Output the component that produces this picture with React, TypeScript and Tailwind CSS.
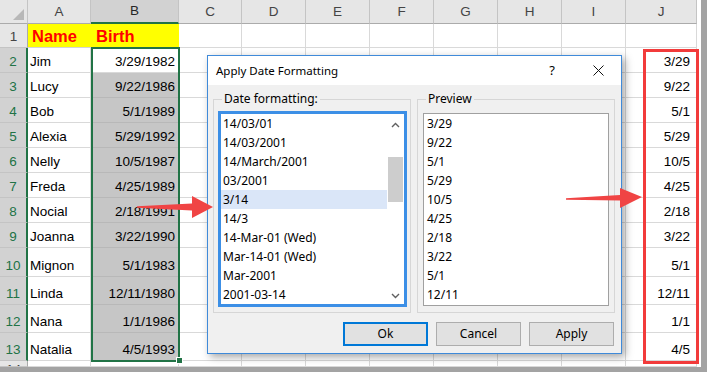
import React from "react";

const names = ["Jim", "Lucy", "Bob", "Alexia", "Nelly", "Freda", "Nocial", "Joanna", "Mignon", "Linda", "Nana", "Natalia"];
const births = ["3/29/1982", "9/22/1986", "5/1/1989", "5/29/1992", "10/5/1987", "4/25/1989", "2/18/1991", "3/22/1990", "5/1/1983", "12/11/1980", "1/1/1986", "4/5/1993"];
const shorts = ["3/29", "9/22", "5/1", "5/29", "10/5", "4/25", "2/18", "3/22", "5/1", "12/11", "1/1", "4/5"];
const formats = ["14/03/01", "14/03/2001", "14/March/2001", "03/2001", "3/14", "14/3", "14-Mar-01 (Wed)", "Mar-14-01 (Wed)", "Mar-2001", "2001-03-14"];
const preview = ["3/29", "9/22", "5/1", "5/29", "10/5", "4/25", "2/18", "3/22", "5/1", "12/11"];
const letters = ["A", "B", "C", "D", "E", "F", "G", "H", "I", "J"];

function Sheet() {
  const cells: React.ReactNode[] = [];
  cells.push(
    <div key="corner" className="relative bg-[#e6e6e6] border-r border-b border-r-[#c4c4c4] border-b-[#ababab]">
      <svg className="absolute right-[3px] bottom-[3px]" width="11" height="11">
        <polygon points="11,0 11,11 0,11" fill="#b8b8b8" />
      </svg>
    </div>
  );
  letters.forEach((l) =>
    cells.push(
      <div
        key={"h" + l}
        className={
          l === "B"
            ? "flex items-center justify-center bg-[#d2d2d2] border-r border-r-[#c4c4c4] border-b-2 border-b-[#217346] text-[#262626]"
            : "flex items-center justify-center bg-[#e6e6e6] border-r border-b border-r-[#c4c4c4] border-b-[#ababab] text-[#444444]"
        }
      >
        {l}
      </div>
    )
  );

  for (let r = 1; r <= 14; r++) {
    const sel = r >= 2 && r <= 13;
    cells.push(
      <div
        key={"rh" + r}
        className={
          sel
            ? "flex items-end justify-center pb-[2px] bg-[#d2d2d2] border-b border-b-[#c4c4c4] border-r-2 border-r-[#217346] text-[#217346] overflow-hidden"
            : "flex items-end justify-center pb-[2px] bg-[#e6e6e6] border-b border-b-[#c4c4c4] border-r border-r-[#ababab] text-[#444444] overflow-hidden"
        }
      >
        {r === 14 ? <span className="relative top-[14px]">14</span> : r}
      </div>
    );
    // A
    if (r === 1) {
      cells.push(
        <div key="a1" className="flex items-end pl-[4px] bg-[#ffff00] border-b border-b-[#d4d4d4] text-[#ff0000] font-bold text-[16.5px] leading-[22px]">
          Name
        </div>
      );
      cells.push(
        <div key="b1" className="flex items-end pl-[5px] bg-[#ffff00] border-b border-b-[#d4d4d4] text-[#ff0000] font-bold text-[16.5px] leading-[22px]">
          Birth
        </div>
      );
    } else if (sel) {
      cells.push(
        <div key={"a" + r} className="flex items-end pl-[2px] pb-[2px] bg-white border-r border-b border-[#d9d9d9]">
          {names[r - 2]}
        </div>
      );
      cells.push(
        <div
          key={"b" + r}
          className={
            r === 2
              ? "flex items-end justify-end pr-[3px] pb-[2px] bg-white border-r border-b border-[#d9d9d9]"
              : "flex items-end justify-end pr-[3px] pb-[2px] bg-[#c6c6c6] border-r border-b border-[#b8b8b8]"
          }
        >
          {births[r - 2]}
        </div>
      );
    } else {
      cells.push(<div key={"a" + r} className="bg-white border-r border-b border-[#d9d9d9]" />);
      cells.push(<div key={"b" + r} className="bg-white border-r border-b border-[#d9d9d9]" />);
    }
    for (let c = 0; c < 7; c++) {
      cells.push(<div key={"e" + r + "-" + c} className="bg-white border-r border-b border-[#d9d9d9]" />);
    }
    cells.push(
      <div key={"j" + r} className="flex items-end justify-end pr-[6px] pb-[2px] bg-white border-r border-b border-[#d9d9d9]">
        {sel ? shorts[r - 2] : ""}
      </div>
    );
  }

  return (
    <div className="grid grid-cols-[28px_63px_88px_63px_64px_64px_64px_64px_64px_64px_71px] grid-rows-[24px_24px_25px_25px_25px_25px_25px_25px_25px_25px_29px_28px_28px_28px_6px] text-[13.5px] leading-[16px] text-black font-['Liberation_Sans',Arial,sans-serif]">
      {cells}
    </div>
  );
}

function Chevron({ up }: { up?: boolean }) {
  return (
    <svg width="9" height="6" viewBox="0 0 9 6">
      <polyline
        points={up ? "1,5 4.5,1.5 8,5" : "1,1 4.5,4.5 8,1"}
        fill="none"
        stroke="#606060"
        strokeWidth="1.4"
      />
    </svg>
  );
}

function Dialog() {
  return (
    <div className="absolute left-[207px] top-[55px] w-[415px] h-[299px] border border-[#3f8ad9] bg-[#f0f0f0] shadow-[3px_3px_8px_rgba(0,0,0,0.35)] flex flex-col font-['Noto_Sans',sans-serif] text-[12px] text-black">
      <div className="h-[29px] bg-white flex items-center">
        <span className="flex-1 pl-[8px] text-[11.5px]">Apply Date Formatting</span>
        <span className="w-[46px] h-full flex items-center justify-center text-[13px]">?</span>
        <span className="w-[46px] h-full flex items-center justify-center">
          <svg width="11" height="11" viewBox="0 0 11 11">
            <line x1="0.5" y1="0.5" x2="10.5" y2="10.5" stroke="#111" strokeWidth="1" />
            <line x1="10.5" y1="0.5" x2="0.5" y2="10.5" stroke="#111" strokeWidth="1" />
          </svg>
        </span>
      </div>
      <div className="flex-1 flex flex-col pl-[5px] pt-[14px]">
        <div className="flex gap-[6px] h-[214px]">
          <div className="relative w-[198px] h-full border border-[#d6d6d6] pt-[11px] pl-[4px] pr-[3px] pb-[5px] flex">
            <span className="absolute -top-[10px] left-[8px] px-[2px] bg-[#f0f0f0] leading-[18px]">Date formatting:</span>
            <div className="flex-1 flex border-[3px] border-[#3c8fe6] bg-white">
              <div className="flex-1 flex flex-col">
                {formats.map((f, i) => (
                  <div
                    key={f}
                    className={i === 4 ? "h-[19px] flex items-center pl-[2px] bg-[#dae6f8]" : "h-[19px] flex items-center pl-[2px]"}
                  >
                    {f}
                  </div>
                ))}
              </div>
              <div className="w-[17px] flex flex-col bg-white">
                <div className="h-[17px] flex items-center justify-center pt-[4px]">
                  <Chevron up />
                </div>
                <div className="flex-1 px-[1px]">
                  <div className="mt-[26px] h-[45px] bg-[#cdcdcd]" />
                </div>
                <div className="h-[17px] flex items-center justify-center">
                  <Chevron />
                </div>
              </div>
            </div>
          </div>
          <div className="relative w-[198px] h-full border border-[#d6d6d6] pt-[13px] px-[5px] pb-[6px] flex">
            <span className="absolute -top-[10px] left-[8px] px-[2px] bg-[#f0f0f0] leading-[18px]">Preview</span>
            <div className="flex-1 flex flex-col border border-[#a0a0a0] bg-white">
              {preview.map((p, i) => (
                <div key={i} className="h-[19px] flex items-center pl-[3px]">
                  {p}
                </div>
              ))}
            </div>
          </div>
        </div>
        <div className="flex justify-end gap-[8px] pr-[7px] mt-[9px]">
          <div className="w-[85px] h-[24px] flex items-center justify-center bg-[#e1e1e1] border-2 border-[#0078d7]">Ok</div>
          <div className="w-[85px] h-[24px] flex items-center justify-center bg-[#e1e1e1] border border-[#adadad]">Cancel</div>
          <div className="w-[85px] h-[24px] flex items-center justify-center bg-[#e1e1e1] border border-[#adadad]">Apply</div>
        </div>
      </div>
    </div>
  );
}

export default function App() {
  return (
    <div className="relative w-[707px] h-[372px] overflow-hidden bg-[#a3a3a3]">
      <div className="w-[701px] h-[367px] bg-white overflow-hidden">
        <Sheet />
      </div>
      {/* selection outline */}
      <div className="absolute left-[91px] top-[47px] w-[89px] h-[315px] border-2 border-[#217346]" />
      <div className="absolute left-[176px] top-[357px] w-[7px] h-[7px] bg-[#217346] border border-white" />
      <Dialog />
      {/* red box around column J */}
      <div className="absolute left-[643px] top-[49px] w-[56px] h-[315px] border-[3px] border-[#f23b3b]" />
      <svg className="absolute left-0 top-0 pointer-events-none" width="707" height="372">
        <polygon points="137,206.2 192,203.5 192,196 213,207 192,218 192,210.5 137,207.8" fill="#f04444" />
        <polygon points="566,198.3 620,195 620,188 642,197 620,208 620,200.5 566,199.7" fill="#f04444" />
      </svg>
    </div>
  );
}
